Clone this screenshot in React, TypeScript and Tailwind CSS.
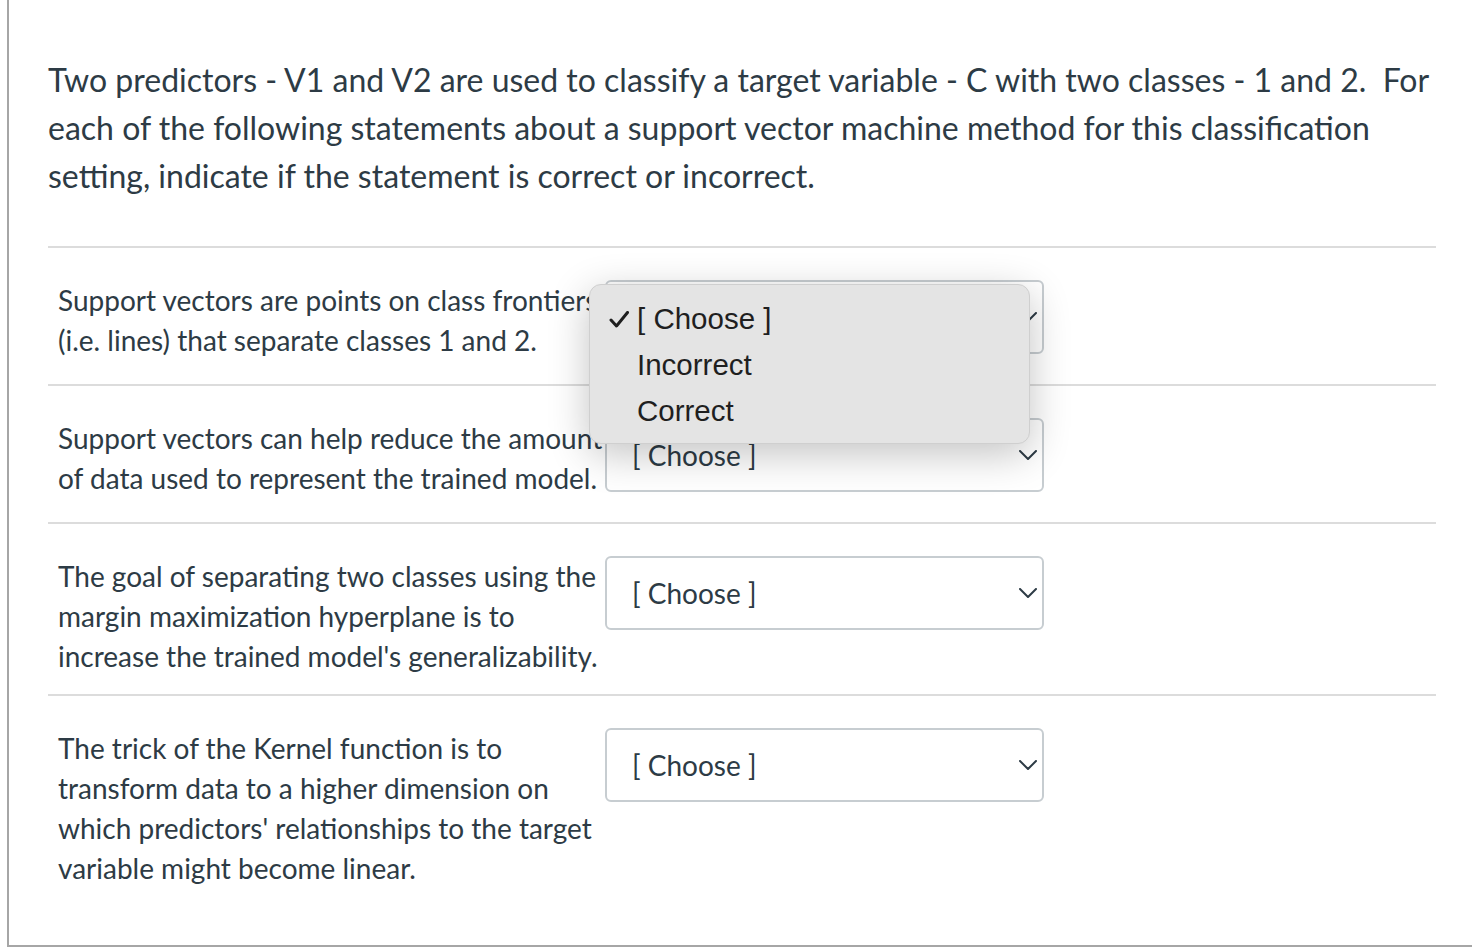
const statements = [
  {
    text: "Support vectors are points on class frontiers (i.e. lines) that separate classes 1 and 2.",
    pad: "pb-[24px]",
    open: true,
  },
  {
    text: "Support vectors can help reduce the amount of data used to represent the trained model.",
    pad: "pb-[24px]",
    open: false,
  },
  {
    text: "The goal of separating two classes using the margin maximization hyperplane is to increase the trained model's generalizability.",
    pad: "pb-[18px]",
    open: false,
  },
  {
    text: "The trick of the Kernel function is to transform data to a higher dimension on which predictors' relationships to the target variable might become linear.",
    pad: "pb-0",
    open: false,
  },
];

function Chevron() {
  return (
    <svg width="18" height="10" viewBox="0 0 18 10" fill="none" className="text-[#2d3b45]">
      <path d="M1 1l8 8 8-8" stroke="currentColor" strokeWidth="2" strokeLinecap="round" strokeLinejoin="round" />
    </svg>
  );
}

function Check() {
  return (
    <svg width="20" height="17" viewBox="0 0 20 17" fill="none">
      <path d="M2 9l5.5 6L18.5 1.5" stroke="#1f1f1f" strokeWidth="3" strokeLinecap="round" strokeLinejoin="round" />
    </svg>
  );
}

function Menu() {
  return (
    <div className="absolute left-[-16px] top-[4px] z-10 w-[441px] rounded-[12px] border border-[#cfcfcf] bg-[#e4e4e4] pt-[11px] pb-[9px] font-['Liberation_Sans',Arial,sans-serif] text-[29.5px] text-[#1f1f1f] shadow-[0_10px_40px_rgba(0,0,0,0.24)]">
      <div className="flex h-[46px] items-center">
        <span className="flex w-[47px] justify-end pr-[8px]">
          <Check />
        </span>
        <span>[ Choose ]</span>
      </div>
      <div className="flex h-[46px] items-center pl-[47px]">Incorrect</div>
      <div className="flex h-[46px] items-center pl-[47px]">Correct</div>
    </div>
  );
}

function Select({ open }: { open: boolean }) {
  return (
    <div className="relative shrink-0">
      <div className="flex h-[74px] w-[439px] items-center justify-between rounded-[6px] border-2 border-[#c7cdd1] bg-white pl-[25px] pr-[5px] text-[28px] text-[#2d3b45]">
        <span>[ Choose ]</span>
        <Chevron />
      </div>
      {open && <Menu />}
    </div>
  );
}

export default function App() {
  return (
    <div className="min-h-screen bg-white font-['Lato',sans-serif] text-[#2d3b45]">
      <div className="ml-[7px] border-b-2 border-l-2 border-[#a6a6a6] pt-[56px] pb-[57px] pl-[39px] pr-[36px]">
        <p className="text-[32px] leading-[48px]">
          Two predictors - V1 and V2 are used to classify a target variable - C with two classes - 1 and 2.{"\u00a0"} For each of the following statements about a support vector machine method for this classification setting, indicate if the statement is correct or incorrect.
        </p>
        <div className="mt-[46px]">
          {statements.map((s, i) => (
            <div key={i} className={`flex border-t-2 border-[#dcdcdc] pt-[32px] ${s.pad}`}>
              <div className="w-[557px] shrink-0 pl-[10px] pr-[2px] text-[28px] leading-[40px]">{s.text}</div>
              <Select open={s.open} />
            </div>
          ))}
        </div>
      </div>
    </div>
  );
}
